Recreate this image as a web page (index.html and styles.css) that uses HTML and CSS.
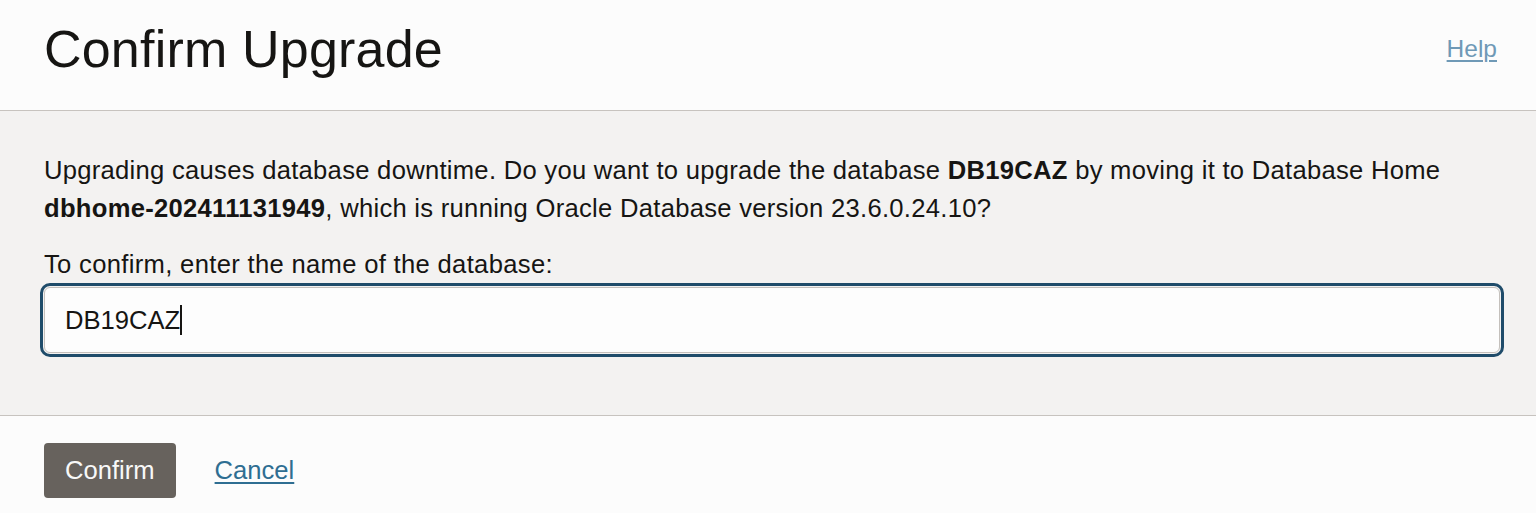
FILE: index.html
```html
<!DOCTYPE html>
<html lang="en">
<head>
<meta charset="utf-8">
<title>Confirm Upgrade</title>
<link rel="stylesheet" href="styles.css">
</head>
<body>
<div class="dialog">
  <header class="dialog-header">
    <h1 class="dialog-title">Confirm Upgrade</h1>
    <a class="help-link" href="#">Help</a>
  </header>
  <section class="dialog-body">
    <p class="message">Upgrading causes database downtime. Do you want to upgrade the database <strong>DB19CAZ</strong> by moving it to Database Home <strong>dbhome-202411131949</strong>, which is running Oracle Database version 23.6.0.24.10?</p>
    <label class="field-label" for="dbname">To confirm, enter the name of the database:</label>
    <div class="field" id="dbname" role="textbox" tabindex="0"><span class="field-value">DB19CAZ</span><span class="caret"></span></div>
  </section>
  <footer class="dialog-footer">
    <button class="btn-confirm" type="button">Confirm</button>
    <a class="cancel-link" href="#">Cancel</a>
  </footer>
</div>
</body>
</html>
```

FILE: styles.css
```css
* { box-sizing: border-box; }

html, body {
  margin: 0;
  padding: 0;
}

body {
  font-family: "Liberation Sans", Arial, Helvetica, sans-serif;
  color: #161513;
  background: #fcfcfc;
  width: 1536px;
  height: 513px;
  overflow: hidden;
}

.dialog {
  display: flex;
  flex-direction: column;
  height: 513px;
}

.dialog-header {
  display: flex;
  justify-content: space-between;
  align-items: flex-start;
  height: 111px;
  padding: 23px 39px 0 44px;
  background: #fcfcfc;
  border-bottom: 1px solid #c7c3bf;
}

.dialog-title {
  margin: 0;
  font-size: 52px;
  line-height: 52px;
  font-weight: normal;
  letter-spacing: 0.2px;
  color: #161513;
}

.help-link {
  margin-top: 13px;
  font-size: 24.5px;
  line-height: 25px;
  color: #6f99b6;
  text-decoration: underline;
  text-decoration-thickness: 1.5px;
  text-underline-offset: 3px;
}

.dialog-body {
  background: #f3f2f1;
  padding: 40px 36px 62px 44px;
  border-bottom: 1px solid #c7c3bf;
}

.message {
  margin: 0;
  font-size: 25.6px;
  line-height: 38.4px;
  letter-spacing: 0.28px;
}

.message strong {
  font-weight: bold;
}

.field-label {
  display: block;
  margin-top: 17px;
  font-size: 25.6px;
  line-height: 38.4px;
  letter-spacing: 0.32px;
}

.field {
  display: flex;
  align-items: center;
  margin-top: 4px;
  height: 66px;
  padding: 0 20px;
  background: #fdfdfd;
  border: 1px solid #c4c0bc;
  border-radius: 6px;
  outline: 3px solid #1f4c6a;
  outline-offset: 1px;
  font-size: 25.6px;
  color: #161513;
}

.caret {
  display: inline-block;
  width: 1.5px;
  height: 30px;
  background: #161513;
}

.dialog-footer {
  flex: 1;
  display: flex;
  align-items: baseline;
  gap: 39px;
  padding: 27px 44px 0 44px;
  background: #fcfcfc;
}

.btn-confirm {
  height: 55px;
  padding: 0 21px;
  border: none;
  border-radius: 4px;
  background: #67625d;
  color: #f8f8f8;
  font-family: "Liberation Sans", Arial, Helvetica, sans-serif;
  font-size: 25.6px;
  cursor: pointer;
}

.cancel-link {
  font-size: 25.6px;
  color: #2f6e92;
  text-decoration: underline;
  text-decoration-thickness: 1.5px;
  text-underline-offset: 3px;
}
```
